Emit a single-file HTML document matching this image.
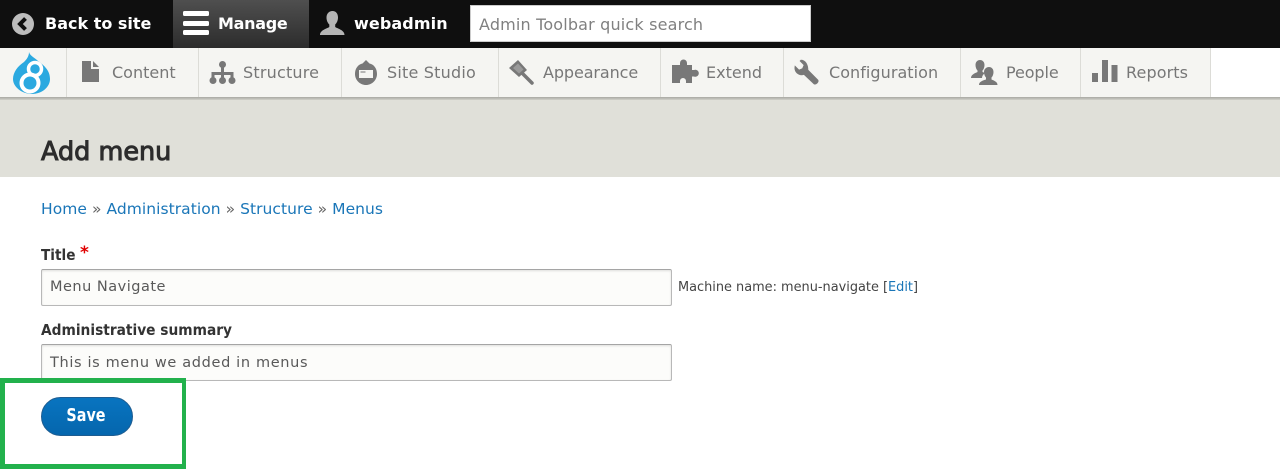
<!DOCTYPE html>
<html><head><meta charset="utf-8"><style>
*{box-sizing:border-box}
html,body{margin:0;padding:0;width:1280px;height:476px;overflow:hidden;background:#fff;font-family:"DejaVu Sans",sans-serif}
.a{position:absolute;white-space:nowrap}
.top{left:0;top:0;width:1280px;height:48px;background:#0f0f0f}
.tb{color:#fff;font-weight:bold;font-size:16px;top:14px;line-height:20px}
.bar{left:0;top:48px;width:1280px;height:50px;background:#fff}
.tab{position:absolute;top:48px;height:49px;background:#f5f5f2;border-right:1px solid #dcdcd7}
.t{color:#777;font-size:16px;top:62.500px;line-height:20px}
a{color:#1a76b8;text-decoration:none}
.inp{background:#fcfcfa;border:1px solid #b8b8b8;border-top-color:#a5a5a5;border-radius:2px;box-shadow:inset 0 1px 2px rgba(0,0,0,.12);color:#595959;font-size:14.500px;padding-left:8px}
svg{position:absolute;overflow:visible}
</style></head><body>
<div class="a top"></div>
<div class="a" style="left:173px;top:0;width:136px;height:48px;background:linear-gradient(#4f4f4f,#2c2c2c)"></div>
<svg style="left:12px;top:13px" width="22" height="22" viewBox="0 0 22 22"><circle cx="11" cy="11" r="11" fill="#bdbdbd"/><path d="M13.500 5.500L8 11l5.500 5.500" fill="none" stroke="#0f0f0f" stroke-width="4"/></svg>
<div class="a tb" style="left:45px">Back to site</div>
<svg style="left:183px;top:11px" width="26" height="24" viewBox="0 0 26 24"><rect width="26" height="5" y="0" rx="1.500" fill="#fff"/><rect width="26" height="5" y="10" rx="1.500" fill="#fff"/><rect width="26" height="5" y="19" rx="1.500" fill="#fff"/></svg>
<div class="a tb" style="left:218px;letter-spacing:-.3px">Manage</div>
<svg style="left:320px;top:11px" width="25" height="24" viewBox="0 0 25 24"><path d="M12.500 0c3.500 0 5.500 2.700 5.500 6.500 0 3-1.200 5.500-2.800 7v2.500c2 1.500 9.300 3 9.300 8H0c0-5 7.300-6.500 9.300-8v-2.500c-1.600-1.500-2.800-4-2.800-7C6.500 2.700 9 0 12.500 0z" fill="#b5b5b5"/></svg>
<div class="a tb" style="left:354px;letter-spacing:.1px">webadmin</div>
<div class="a" style="left:470px;top:5px;width:341px;height:37px;background:#fff;border:1px solid #ccc;color:#808080;font-size:16px;line-height:37px;padding-left:8px;letter-spacing:.17px">Admin Toolbar quick search</div>

<div class="a bar"></div>
<div class="a" style="left:0;top:97px;width:1280px;height:3px;background:linear-gradient(#a8a8a2,#d0d0c9)"></div>
<div class="tab" style="left:0;width:67px"></div>
<div class="tab" style="left:67px;width:132px"></div>
<div class="tab" style="left:199px;width:143px"></div>
<div class="tab" style="left:342px;width:157px"></div>
<div class="tab" style="left:499px;width:162px"></div>
<div class="tab" style="left:661px;width:123px"></div>
<div class="tab" style="left:784px;width:177px"></div>
<div class="tab" style="left:961px;width:120px"></div>
<div class="tab" style="left:1081px;width:130px"></div>

<svg style="left:13px;top:52px" width="37" height="42" viewBox="0 0 37 42"><path d="M16 0c1 4 5 5 9 9 7 5 12 10 12 18 0 8-8 15-18 15S0 35 0 27C0 20 5 14 11 10c3-3 5-6 5-10z" fill="#2ba9e0"/><circle cx="22" cy="17" r="6.500" fill="none" stroke="#fff" stroke-width="3.500"/><circle cx="17" cy="31" r="8.500" fill="none" stroke="#fff" stroke-width="4"/></svg>

<svg style="left:82px;top:61px" width="17" height="21" viewBox="0 0 17 21"><path d="M0 0h9v8h8v13H0zM11 0l6 6h-6z" fill="#787878"/></svg>
<div class="a t" style="left:112px">Content</div>

<svg style="left:210px;top:61px" width="25" height="23" viewBox="0 0 25 23"><g fill="#787878"><circle cx="12.500" cy="3.500" r="3.500"/><circle cx="3" cy="19.500" r="3.500"/><circle cx="12.500" cy="19.500" r="3.500"/><circle cx="22" cy="19.500" r="3.500"/></g><path d="M12.500 5v13M3 18v-5.500h19V18" fill="none" stroke="#787878" stroke-width="3"/></svg>
<div class="a t" style="left:243px;letter-spacing:.2px">Structure</div>

<svg style="left:355px;top:60px" width="22" height="25" viewBox="0 0 22 25"><path d="M11 0l3.500 3.500C19 4.500 22 8.500 22 14c0 6-5 11-11 11S0 20 0 14C0 8.500 3 4.500 7.500 3.500z" fill="#787878"/><rect x="4" y="10" width="14" height="8" fill="#f5f5f2"/><rect x="5.500" y="11.500" width="5" height="1" fill="#787878"/></svg>
<div class="a t" style="left:387px;letter-spacing:.2px">Site Studio</div>

<svg style="left:509px;top:60px" width="25" height="24" viewBox="0 0 25 24"><path d="M0 8L9 0l9 10-8 7z" fill="#787878"/><path d="M4 8l5-4.500 5.500 6L10 13.500z" fill="#9a9a9a"/><path d="M14 14l9 9" stroke="#787878" stroke-width="3.500" stroke-linecap="round"/></svg>
<div class="a t" style="left:543px;letter-spacing:-.1px">Appearance</div>

<svg style="left:672px;top:60px" width="26" height="23" viewBox="0 0 26 23"><path d="M0 5h8V3a3.500 3.500 0 1 1 7 0v2h5v5h2a3.500 3.500 0 1 1 0 6.500h-2V23h-6v-2a3 3 0 1 0-6 0v2H0v-6h-0z" fill="#787878"/></svg>
<div class="a t" style="left:706px">Extend</div>

<svg style="left:795px;top:60px" width="25" height="24" viewBox="0 0 25 24"><path d="M6 0l-1 1 4 4-1.500 3.500L4 10 0 6c-1 5 2 9 7 9l2-.5 10 9.500c2 1 5-2 4-4L13 10c0-6-3-10-7-10z" fill="#787878" stroke="#787878" stroke-width=".6"/></svg>
<div class="a t" style="left:829px;letter-spacing:.05px">Configuration</div>

<svg style="left:971px;top:60px" width="27" height="25" viewBox="0 0 27 25"><g fill="#787878"><path d="M9 0c2.800 0 4.500 2.200 4.500 5 0 2.500-1 4.500-2 5.500v1.500L14 13c-2 1.500-3 3-3 5H0c0-3 3-4.500 6.500-6v-1.500c-1-1-2-3-2-5.500C4.500 2.200 6.200 0 9 0z"/><path d="M18 7c2.800 0 4.500 2.200 4.500 5 0 2.500-1 4.500-2 5.500v2c2 1 6 2 6 5.500H8c0-3.500 4-4.500 7-5.500v-2c-1-1-2-3-2-5.500C13 9.200 15.200 7 18 7z"/></g></svg>
<div class="a t" style="left:1006px;letter-spacing:-.1px">People</div>

<svg style="left:1092px;top:60px" width="26" height="22" viewBox="0 0 26 22"><g fill="#787878"><rect x="0" y="13" width="6" height="9"/><rect x="10" y="0" width="6" height="22"/><rect x="19.500" y="5" width="6" height="17"/></g></svg>
<div class="a t" style="left:1126px;letter-spacing:.1px">Reports</div>

<div class="a" style="left:0;top:100px;width:1280px;height:77px;background:#e0e0d9"></div>
<div class="a" style="left:41px;top:135px;font-size:25.500px;line-height:34px;color:#2c2c2c;-webkit-text-stroke:1px #2c2c2c">Add menu</div>

<div class="a" style="left:41px;top:199px;font-size:15.500px;line-height:20px;color:#666;letter-spacing:.05px"><a href="#">Home</a> » <a href="#">Administration</a> » <a href="#">Structure</a> » <a href="#">Menus</a></div>

<div class="a" style="left:41px;top:245px;font-size:15px;font-weight:bold;line-height:20px;color:#333;transform:scaleX(.91);transform-origin:0 0">Title</div>
<div class="a" style="left:80px;top:243px;font-size:17px;line-height:20px;color:#e00000;font-weight:bold">*</div>
<div class="a inp" style="left:41px;top:269px;width:631px;height:36.500px;line-height:35px;letter-spacing:.5px">Menu Navigate</div>
<div class="a" style="left:678px;top:279px;font-size:12.900px;line-height:17px;color:#444">Machine name: menu-navigate [<a href="#">Edit</a>]</div>

<div class="a" style="left:41px;top:321px;font-size:14.800px;font-weight:bold;line-height:20px;color:#333;transform:scaleX(.93);transform-origin:0 0">Administrative summary</div>
<div class="a inp" style="left:41px;top:344px;width:631px;height:37px;line-height:36px;letter-spacing:.65px">This is menu we added in menus</div>

<div class="a" style="left:0;top:378px;width:186px;height:91px;background:#fff;border:solid #22b14c;border-width:5px 4px 5px 5px"></div>
<div class="a" style="left:41px;top:397px;width:92px;height:39px;border-radius:20px;background:linear-gradient(#0874c0,#0566ad);border:1px solid #1e5c90"></div>
<div class="a" style="left:40px;top:397px;width:92px;height:39px;color:#fff;font-size:17.500px;font-weight:bold;line-height:38px;text-align:center;transform:scaleX(.82);transform-origin:50% 50%">Save</div>
</body></html>
